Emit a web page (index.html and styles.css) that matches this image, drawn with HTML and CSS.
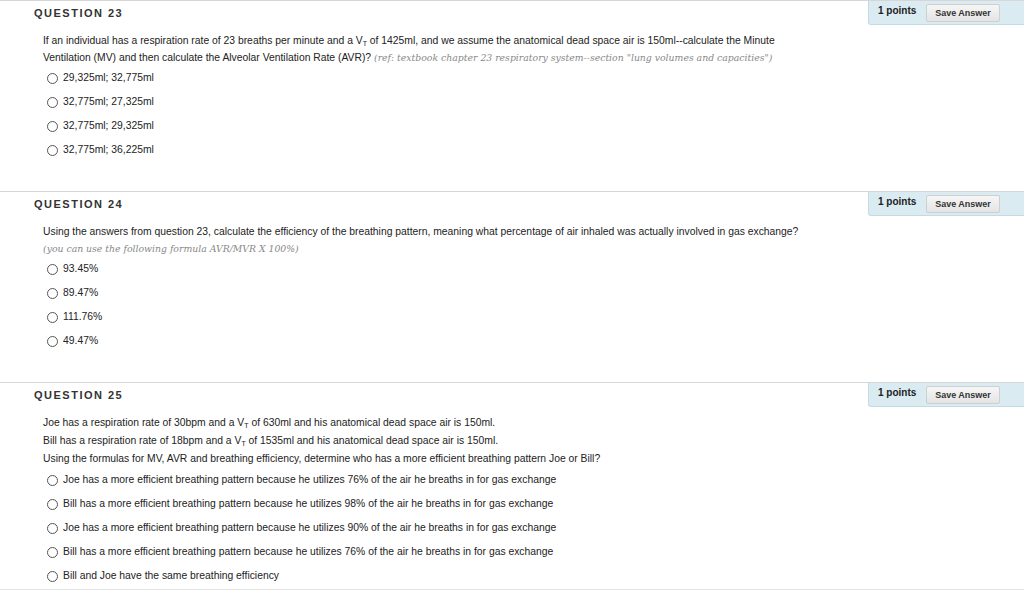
FILE: index.html
```html
<!DOCTYPE html>
<html>
<head>
<meta charset="utf-8">
<link rel="stylesheet" href="styles.css">
</head>
<body>
<div class="question">
  <div class="q-head">
    <h3 class="q-title">QUESTION 23</h3>
    <div class="points"><span class="pts">1 points</span><button class="save">Save Answer</button></div>
  </div>
  <div class="q-text">
    <p class="para">If an individual has a respiration rate of 23 breaths per minute and a V<sub>T</sub> of 1425ml, and we assume the anatomical dead space air is 150ml--calculate the Minute<br>Ventilation (MV) and then calculate the Alveolar Ventilation Rate (AVR)? <span class="ref">(ref: textbook chapter 23 respiratory system--section "lung volumes and capacities")</span></p>
  </div>
  <ul class="opts">
    <li class="opt"><span class="radio"></span>29,325ml; 32,775ml</li>
    <li class="opt"><span class="radio"></span>32,775ml; 27,325ml</li>
    <li class="opt"><span class="radio"></span>32,775ml; 29,325ml</li>
    <li class="opt"><span class="radio"></span>32,775ml; 36,225ml</li>
  </ul>
</div>
<div class="question">
  <div class="q-head">
    <h3 class="q-title">QUESTION 24</h3>
    <div class="points"><span class="pts">1 points</span><button class="save">Save Answer</button></div>
  </div>
  <div class="q-text">
    <p class="para">Using the answers from question 23, calculate the efficiency of the breathing pattern, meaning what percentage of air inhaled was actually involved in gas exchange?<br><span class="ref">(you can use the following formula AVR/MVR X 100%)</span></p>
  </div>
  <ul class="opts">
    <li class="opt"><span class="radio"></span>93.45%</li>
    <li class="opt"><span class="radio"></span>89.47%</li>
    <li class="opt"><span class="radio"></span>111.76%</li>
    <li class="opt"><span class="radio"></span>49.47%</li>
  </ul>
</div>
<div class="question last">
  <div class="q-head">
    <h3 class="q-title">QUESTION 25</h3>
    <div class="points"><span class="pts">1 points</span><button class="save">Save Answer</button></div>
  </div>
  <div class="q-text">
    <p class="line">Joe has a respiration rate of 30bpm and a V<sub>T</sub> of 630ml and his anatomical dead space air is 150ml.</p>
    <p class="line">Bill has a respiration rate of 18bpm and a V<sub>T</sub> of 1535ml and his anatomical dead space air is 150ml.</p>
    <p class="line">Using the formulas for MV, AVR and breathing efficiency, determine who has a more efficient breathing pattern Joe or Bill?</p>
  </div>
  <ul class="opts">
    <li class="opt"><span class="radio"></span>Joe has a more efficient breathing pattern because he utilizes 76% of the air he breaths in for gas exchange</li>
    <li class="opt"><span class="radio"></span>Bill has a more efficient breathing pattern because he utilizes 98% of the air he breaths in for gas exchange</li>
    <li class="opt"><span class="radio"></span>Joe has a more efficient breathing pattern because he utilizes 90% of the air he breaths in for gas exchange</li>
    <li class="opt"><span class="radio"></span>Bill has a more efficient breathing pattern because he utilizes 76% of the air he breaths in for gas exchange</li>
    <li class="opt"><span class="radio"></span>Bill and Joe have the same breathing efficiency</li>
  </ul>
</div>
</body>
</html>
```
FILE: styles.css
```css
html, body {
  margin: 0;
  padding: 0;
  background: #fff;
}
body {
  font-family: "Liberation Sans", Arial, sans-serif;
  font-size: 10.35px;
  color: #222;
}
.question {
  border-top: 1px solid #d6d6d6;
  padding-bottom: 29px;
}
.question.last {
  padding-bottom: 1px;
  border-bottom: 1px solid #e4e4e4;
}
.q-head {
  display: flex;
  justify-content: space-between;
  align-items: flex-start;
  height: 25px;
}
.q-title {
  margin: 0;
  padding: 6px 0 0 34px;
  font-size: 11px;
  font-weight: bold;
  letter-spacing: 1.5px;
  color: #333;
  line-height: 12px;
}
.points {
  width: 156px;
  height: 24px;
  box-sizing: border-box;
  background: #daebf1;
  border-left: 1px solid #c4dbe4;
  border-bottom: 1px solid #c4dbe4;
  border-bottom-left-radius: 3px;
  display: flex;
  align-items: flex-start;
  padding: 2px 0 0 9px;
}
.pts {
  font-weight: bold;
  font-size: 10px;
  color: #222;
  line-height: 16px;
  width: 48px;
}
.save {
  font-family: "Liberation Sans", Arial, sans-serif;
  font-size: 9px;
  font-weight: bold;
  color: #333;
  background: linear-gradient(#f6f6f6, #e4e4e4);
  border: 1px solid #cfcfcf;
  border-radius: 2px;
  width: 74px;
  height: 18px;
  padding: 0;
  margin-top: 1px;
}
.q-text {
  margin: 6px 0 0 43px;
}
.para {
  margin: 0;
  line-height: 17px;
  white-space: nowrap;
}
.line {
  margin: 0;
  line-height: 18px;
}
sub {
  font-size: 7px;
  line-height: 0;
  vertical-align: -2px;
}
.ref {
  font-family: "DejaVu Serif", Georgia, serif;
  font-style: italic;
  font-size: 9.3px;
  color: #888;
}
.opts {
  list-style: none;
  margin: 0;
  padding: 0 0 0 47px;
}
.opt {
  height: 24px;
  display: flex;
  align-items: center;
  line-height: 14px;
}
.radio {
  width: 9px;
  height: 9px;
  border: 1px solid #555;
  border-radius: 50%;
  box-sizing: content-box;
  margin-right: 5px;
  flex: none;
}
```
